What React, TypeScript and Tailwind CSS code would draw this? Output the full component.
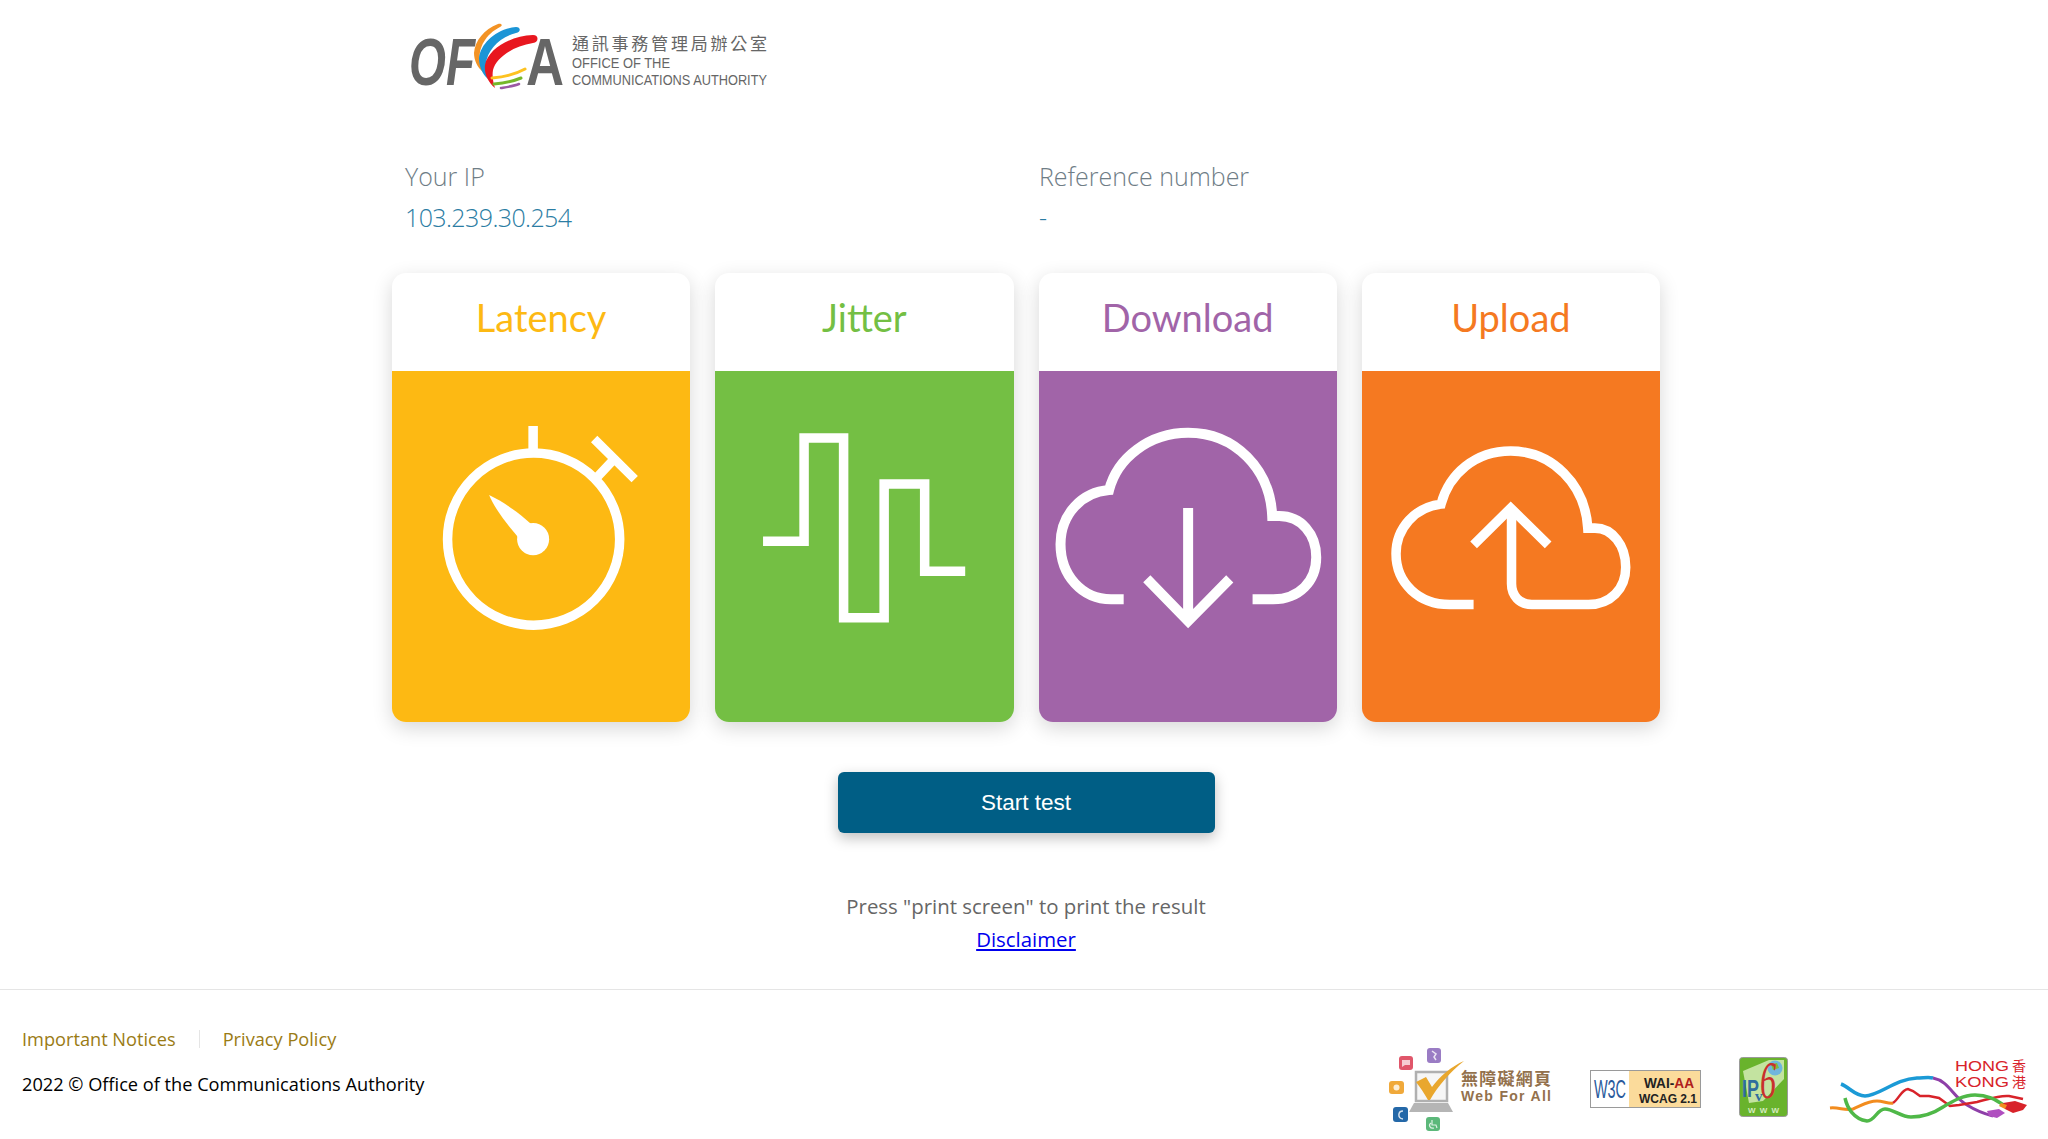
function OfcaLogo() {
  return (
    <svg viewBox="0 0 362 68" className="w-[362px] h-[68px]">
      <text x="1" y="63" textLength="66" lengthAdjust="spacingAndGlyphs" className="font-['Liberation_Sans'] font-bold italic text-[67px] fill-[#666666]">OF</text>
      <text x="118" y="63" textLength="38" lengthAdjust="spacingAndGlyphs" className="font-['Liberation_Sans'] font-bold text-[67px] fill-[#666666]">A</text>
      <path d="M90 2 C94 1 95 4 92 5 C78 12 70 26 72 38 C72 42 74 47 75 50 C69 45 66 38 66 31 C67 19 76 7 90 2 Z" className="fill-[#f39325]" />
      <path d="M108 5 C113 5 113 10 108 11 C92 15 79 28 78 42 C78 47 79 52 80 57 C74 52 71 44 71 36 C73 21 88 7 108 5 Z" className="fill-[#1b95d6]" />
      <path d="M125 13 C131 13 131 20 125 21 C105 24 88 36 85 48 C84 54 85 60 87 66 C80 60 76 52 77 43 C80 27 102 14 125 13 Z" className="fill-[#e8171f]" />
      <path d="M84 56 C96 55 108 52 117 47" strokeWidth="3" strokeLinecap="round" className="fill-none stroke-[#fdc221]" />
      <path d="M86 62 C96 61 106 59 113 56" strokeWidth="3" strokeLinecap="round" className="fill-none stroke-[#76b82a]" />
      <path d="M93 66 C99 65 106 64 111 62" strokeWidth="2.5" strokeLinecap="round" className="fill-none stroke-[#9b59a4]" />
      <text x="164" y="28" textLength="195" lengthAdjust="spacing" className="font-['Noto_Sans_CJK_TC'] text-[17px] fill-[#666666]">通訊事務管理局辦公室</text>
      <text x="164" y="46" textLength="98" lengthAdjust="spacingAndGlyphs" className="font-['Liberation_Sans'] text-[15px] fill-[#666666]">OFFICE OF THE</text>
      <text x="164" y="63" textLength="195" lengthAdjust="spacingAndGlyphs" className="font-['Liberation_Sans'] text-[15px] fill-[#666666]">COMMUNICATIONS AUTHORITY</text>
    </svg>
  );
}

function Stopwatch() {
  return (
    <svg viewBox="0 0 298 351" className="w-full h-full fill-none stroke-white">
      <circle cx="141.5" cy="168" r="86" strokeWidth="9.5" />
      <path d="M141 55 V80" strokeWidth="9.5" />
      <path d="M202 68 L242.5 108 M220 90 L205 106" strokeWidth="9" />
      <circle cx="141" cy="168" r="16" className="fill-white stroke-none" />
      <path d="M97 124 C112 131 127 142 139 153 L126 166 C114 152 103 138 97 124 Z" className="fill-white stroke-none" />
    </svg>
  );
}

function JitterIcon() {
  return (
    <svg viewBox="0 0 298 351" className="w-full h-full fill-none stroke-white">
      <path d="M48 170 H89 V67 H128.5 V246.5 H169 V113 H209.5 V200 H250" strokeWidth="9.5" />
    </svg>
  );
}

function CloudDown() {
  return (
    <svg viewBox="0 0 298 351" className="w-full h-full fill-none stroke-white">
      <path d="M84.6 228 H72 C43 228 21.5 204 21.5 173 C21.5 143 43 121 70 119 C78 87 110 61.7 149 61.7 C196 61.7 231 98 233 145 H240 C262 145 277 163 277 186 C277 210 260 228 234 228 H213.4" strokeWidth="10" />
      <path d="M149 137 V250 M107.7 207.7 L149 250 L190.6 207.7" strokeWidth="10" />
    </svg>
  );
}

function CloudUp() {
  return (
    <svg viewBox="0 0 298 351" className="w-full h-full fill-none stroke-white">
      <path d="M111.5 233.3 H87.5 C57 233.3 34 212 34 182.7 C34 157 53 136 79 133 C87 103 113 80 148.6 80 C190 80 223 113 225.6 157 H232.7 C250 157 263.5 174 263.5 196 C263.5 218 248 233.3 226.4 233.3 H169.6 C157 233.3 149.4 224 149.4 212.7 V140" strokeWidth="9.5" />
      <path d="M111.5 173.7 L148.6 137 L186 173.7" strokeWidth="9.5" />
    </svg>
  );
}

function WebForAll() {
  return (
    <svg viewBox="0 0 164 85" className="w-[164px] h-[85px]">
      <rect x="11" y="10" width="14" height="14" rx="3" className="fill-[#e0566a]" />
      <path d="M14 14 H22 V19 H17 L14 21 Z" className="fill-white opacity-70" />
      <rect x="39" y="2" width="14" height="15" rx="3" className="fill-[#9a7cc4]" />
      <path d="M44 5 L48 8 L46 11 L48 14" strokeWidth="1.5" className="fill-none stroke-white opacity-80" />
      <rect x="1" y="35" width="15" height="13" rx="3" className="fill-[#f0a93a]" />
      <circle cx="8.5" cy="41.5" r="3" className="fill-white opacity-80" />
      <rect x="5" y="61" width="15" height="15" rx="3" className="fill-[#2468a8]" />
      <path d="M15 65 C10 65 9 72 15 73" strokeWidth="1.5" className="fill-none stroke-white opacity-80" />
      <rect x="38" y="71" width="14" height="14" rx="3" className="fill-[#5cb87a]" />
      <path d="M44 74 V79 H48 L49 82 M43 77 C40 79 42 83 46 82" strokeWidth="1.2" className="fill-none stroke-white opacity-80" />
      <rect x="28" y="26" width="31" height="29" className="fill-[#f6f6f6] stroke-[#b0b0b0]" strokeWidth="2.5" />
      <path d="M26 57 H60 L65 66 H21 Z" className="fill-[#b5b5b5]" />
      <path d="M28 36 L38 31 L44 41 C52 30 64 20 76 15 C62 26 50 40 42 54 L40 54 C36 47 32 41 28 36 Z" className="fill-[#e9a72e]" />
      <text x="73" y="39" textLength="90" lengthAdjust="spacing" className="font-['Noto_Sans_CJK_TC'] font-bold text-[17px] fill-[#93714c]">無障礙網頁</text>
      <text x="73" y="55" textLength="90" lengthAdjust="spacing" className="font-['Liberation_Sans'] font-bold text-[14px] fill-[#93714c]">Web For All</text>
    </svg>
  );
}

function W3cBadge() {
  return (
    <svg viewBox="0 0 111 38" className="w-[111px] h-[38px]">
      <rect x="0.5" y="0.5" width="110" height="37" className="fill-white stroke-[#9a9a9a]" />
      <rect x="39" y="1" width="71" height="36" className="fill-[#fbdb9b]" />
      <text x="4" y="28" textLength="32" lengthAdjust="spacingAndGlyphs" className="font-['Liberation_Sans'] text-[25px] fill-[#2a5a9c]">W3C</text>
      <text x="54" y="18" textLength="50" lengthAdjust="spacingAndGlyphs" className="font-['Liberation_Sans'] font-bold text-[14px] fill-[#222222]">WAI-<tspan className="fill-[#b0201c]">AA</tspan></text>
      <text x="49" y="33" className="font-['Liberation_Sans'] font-bold text-[12px] fill-[#222222]">WCAG 2.1</text>
    </svg>
  );
}

function Ipv6Badge() {
  return (
    <svg viewBox="0 0 49 62" className="w-[49px] h-[62px]">
      <rect x="0.5" y="0.5" width="48" height="59" rx="3" className="fill-[#69b32c] stroke-[#9a9a9a]" />
      <path d="M4 14 L30 3 L45 3 L45 22 L24 44 L10 46 Z" className="fill-[#c3e3a0]" />
      <circle cx="36" cy="11" r="7.5" className="fill-[#6fb6dc]" />
      <path d="M32 7 L38 6 L40 11 L34 13 Z" className="fill-[#7dbb3c]" />
      <text x="3" y="40" textLength="17" lengthAdjust="spacingAndGlyphs" className="font-['Liberation_Sans'] font-bold text-[24px] fill-[#2f6d9e]">IP</text>
      <text x="16" y="44" className="font-['Liberation_Serif'] font-bold text-[15px] fill-[#2f6d9e]">v</text>
      <text x="21" y="41" textLength="16" lengthAdjust="spacingAndGlyphs" className="font-['Liberation_Serif'] italic text-[52px] fill-[#c9302c]">6</text>
      <text x="9" y="56" textLength="31" lengthAdjust="spacing" className="font-['Liberation_Sans'] font-bold text-[8px] fill-[#d6ecc0]">WWW</text>
    </svg>
  );
}

function BrandHk() {
  return (
    <svg viewBox="0 0 199 66" className="w-[199px] h-[66px] fill-none">
      <text x="126" y="12" textLength="54" lengthAdjust="spacingAndGlyphs" className="font-['Liberation_Sans'] text-[15px] fill-[#d8232a]">HONG</text>
      <text x="126" y="28" textLength="54" lengthAdjust="spacingAndGlyphs" className="font-['Liberation_Sans'] text-[15px] fill-[#d8232a]">KONG</text>
      <text x="183" y="12" className="font-['Noto_Sans_CJK_TC'] text-[14px] fill-[#d8232a]">香</text>
      <text x="183" y="28" className="font-['Noto_Sans_CJK_TC'] text-[14px] fill-[#d8232a]">港</text>
      <path d="M12 25 C20 28 26 37 36 37 C50 37 66 20 88 19 C94 19 100 18 104 19" strokeWidth="3.5" className="stroke-[#1b9ad6]" />
      <path d="M104 19 C120 22 124 38 138 46 C146 51 156 55 164 57" strokeWidth="3" className="stroke-[#8e3fa8]" />
      <path d="M1 49 C10 48 16 52 24 50 C32 47 38 42 48 42 C54 42 60 45 64 44" strokeWidth="3" className="stroke-[#f28c1e]" />
      <path d="M64 44 C70 40 72 31 79 30 L84 32 L91 37 L100 37 L110 39 L121 47 L130 46 L148 43 C160 40 170 36 180 37 L194 40" strokeWidth="2.5" className="stroke-[#d8232a]" />
      <path d="M16 39 C18 48 24 60 38 62 C46 62 48 50 56 50 C64 50 72 58 82 58 C92 58 102 56 114 48 C124 42 134 36 146 36 C158 36 166 40 176 47" strokeWidth="3.5" className="stroke-[#4fb848]" />
      <path d="M174 44 L186 42 L198 46 L194 51 L184 54 L176 50 Z" className="fill-[#d8232a]" />
      <path d="M172 44 L178 46 L176 50 L170 47 Z" className="fill-[#f28c1e]" />
      <path d="M158 52 L170 50 L176 54 L168 59 L160 57 Z" className="fill-[#b04fc0]" />
    </svg>
  );
}

const cards = [
  { title: "Latency", text: "text-[#fdb913]", bg: "bg-[#fdb913]", icon: <Stopwatch /> },
  { title: "Jitter", text: "text-[#74bf44]", bg: "bg-[#74bf44]", icon: <JitterIcon /> },
  { title: "Download", text: "text-[#a164a8]", bg: "bg-[#a164a8]", icon: <CloudDown /> },
  { title: "Upload", text: "text-[#f57921]", bg: "bg-[#f57921]", icon: <CloudUp /> },
];

export default function App() {
  return (
    <div className="min-h-[1139px] bg-white font-['Open_Sans',sans-serif] overflow-hidden">
      <div className="ml-[392px] w-[1268px]">
        <div className="pt-[22px] pl-[16px]">
          <OfcaLogo />
        </div>

        <div className="mt-[66px] flex text-[25px] leading-[41px] font-light">
          <div className="w-[647px] pl-[13px]">
            <div className="text-[#6f7d86]">Your IP</div>
            <div className="text-[#2b7da3] tracking-[-0.6px]">103.239.30.254</div>
          </div>
          <div>
            <div className="text-[#6f7d86]">Reference number</div>
            <div className="text-[#2b7da3]">-</div>
          </div>
        </div>

        <div className="mt-[35px] grid grid-cols-4 gap-[25px]">
          {cards.map((c) => (
            <div key={c.title} className="h-[449px] rounded-[14px] overflow-hidden shadow-[0_6px_20px_rgba(0,0,0,0.16)] bg-white flex flex-col">
              <div className={`h-[98px] pb-[8px] flex items-center justify-center font-['Lato',sans-serif] text-[38px] ${c.text}`}>
                {c.title}
              </div>
              <div className={`flex-1 ${c.bg}`}>{c.icon}</div>
            </div>
          ))}
        </div>

        <div className="mt-[50px] flex justify-center">
          <button className="w-[377px] h-[61px] rounded-[6px] bg-[#005e85] text-white font-['Liberation_Sans',sans-serif] text-[22.5px] shadow-[0_5px_14px_rgba(0,0,0,0.25)]">
            Start test
          </button>
        </div>

        <div className="mt-[57px] text-center text-[20.4px] leading-[33px] text-[#666666]">
          <div>Press "print screen" to print the result</div>
          <a href="#" className="text-[#0000ee] underline">Disclaimer</a>
        </div>
      </div>

      <footer className="mt-[33px] border-t border-[#e5e5e5] flex justify-between px-[22px]">
        <div className="pt-[35px] text-[18.2px] leading-[28px]">
          <div className="flex items-center text-[#9a7b14]">
            <a href="#">Important Notices</a>
            <span className="mx-[23px] h-[18px] w-px bg-[#e5e5e5]" />
            <a href="#">Privacy Policy</a>
          </div>
          <div className="mt-[17px] text-black">2022 © Office of the Communications Authority</div>
        </div>
        <div className="pt-[56px] flex items-start">
          <WebForAll />
          <div className="ml-[38px] mt-[24px]"><W3cBadge /></div>
          <div className="ml-[38px] mt-[11px]"><Ipv6Badge /></div>
          <div className="ml-[41px] mt-[13px] -mr-[2px]"><BrandHk /></div>
        </div>
      </footer>
    </div>
  );
}
